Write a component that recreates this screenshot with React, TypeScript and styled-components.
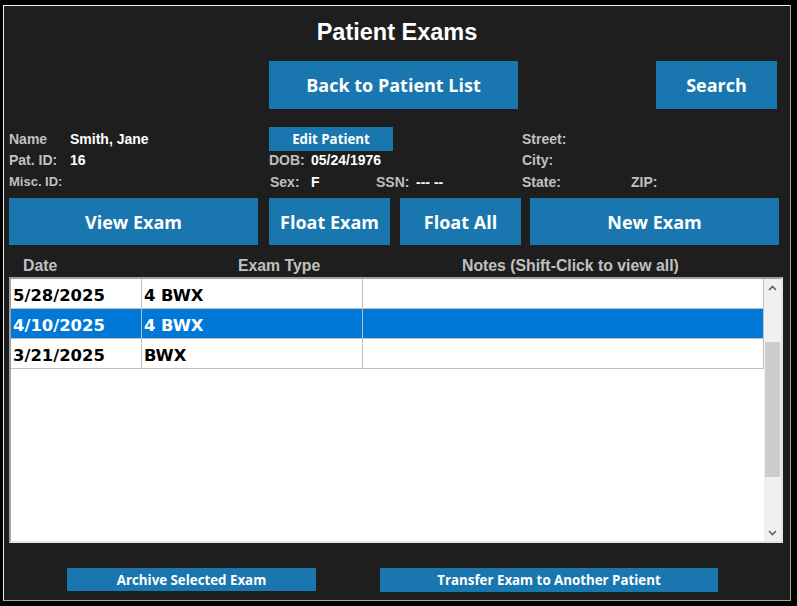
import React, { useState } from 'react';
import styled, { createGlobalStyle } from 'styled-components';

const GlobalStyle = createGlobalStyle`
  html, body {
    margin: 0;
    padding: 0;
    background: #000;
  }
  * {
    box-sizing: border-box;
  }
`;

const exams = [
  { date: '5/28/2025', type: '4 BWX', notes: '' },
  { date: '4/10/2025', type: '4 BWX', notes: '' },
  { date: '3/21/2025', type: 'BWX', notes: '' },
];

const App = () => {
  const [selected, setSelected] = useState(1);

  return (
    <>
      <GlobalStyle />
      <Panel>
        <Title>Patient Exams</Title>

        <TopRow>
          <BigButton $width={249} $height={48}>Back to Patient List</BigButton>
          <BigButton $width={121} $height={48} $gap={138}>Search</BigButton>
        </TopRow>

        <InfoGrid>
          <InfoLine>
            <Label $width={61}>Name</Label>
            <Value>Smith, Jane</Value>
          </InfoLine>
          <InfoLine>
            <SmallButton $width={124} $height={24}>Edit Patient</SmallButton>
          </InfoLine>
          <InfoLine>
            <Label>Street:</Label>
          </InfoLine>

          <InfoLine>
            <Label $width={61}>Pat. ID:</Label>
            <Value>16</Value>
          </InfoLine>
          <InfoLine>
            <Label $width={42}>DOB:</Label>
            <Value>05/24/1976</Value>
          </InfoLine>
          <InfoLine>
            <Label>City:</Label>
          </InfoLine>

          <InfoLine>
            <Label $size={13}>Misc. ID:</Label>
          </InfoLine>
          <InfoLine $indent={1}>
            <Label $width={41}>Sex:</Label>
            <Value $width={65}>F</Value>
            <Label $width={40}>SSN:</Label>
            <Value>--- --</Value>
          </InfoLine>
          <InfoLine>
            <Label $width={109}>State:</Label>
            <Label>ZIP:</Label>
          </InfoLine>
        </InfoGrid>

        <ActionRow>
          <BigButton $width={249} $height={47}>View Exam</BigButton>
          <BigButton $width={121} $height={47} $gap={11}>Float Exam</BigButton>
          <BigButton $width={121} $height={47} $gap={10}>Float All</BigButton>
          <BigButton $width={249} $height={47} $gap={9}>New Exam</BigButton>
        </ActionRow>

        <HeaderRow>
          <HeaderCell $width={229} $pad={14}>Date</HeaderCell>
          <HeaderCell $width={224}>Exam Type</HeaderCell>
          <HeaderCell>Notes (Shift-Click to view all)</HeaderCell>
        </HeaderRow>

        <Table>
          <Rows>
            {exams.map((exam, i) => (
              <Row key={exam.date} $selected={i === selected} onClick={() => setSelected(i)}>
                <Cell $width={131}>{exam.date}</Cell>
                <Cell $width={221}>{exam.type}</Cell>
                <Cell $width={401}>{exam.notes}</Cell>
              </Row>
            ))}
          </Rows>
          <ScrollBar>
            <ArrowButton>
              <svg width="9" height="6" viewBox="0 0 9 6">
                <path d="M1 5 L4.5 1.5 L8 5" fill="none" stroke="#606060" strokeWidth="1.6" />
              </svg>
            </ArrowButton>
            <Track>
              <Thumb />
            </Track>
            <ArrowButton>
              <svg width="9" height="6" viewBox="0 0 9 6">
                <path d="M1 1 L4.5 4.5 L8 1" fill="none" stroke="#606060" strokeWidth="1.6" />
              </svg>
            </ArrowButton>
          </ScrollBar>
        </Table>

        <BottomRow>
          <SmallButton $width={249} $height={23} $gap={58}>Archive Selected Exam</SmallButton>
          <SmallButton $width={338} $height={24} $gap={64}>Transfer Exam to Another Patient</SmallButton>
        </BottomRow>
      </Panel>
    </>
  );
};

const Panel = styled.div`
  margin: 5px 0 0 3px;
  width: 788px;
  height: 596px;
  background: #1e1e1e;
  border-top: 1px solid #f0f0f0;
  border-left: 1px solid #f0f0f0;
  border-right: 1px solid #a8a8a8;
  border-bottom: 1px solid #a8a8a8;
  padding-left: 5px;
  display: flex;
  flex-direction: column;
  font-family: 'Liberation Sans', Arial, sans-serif;
`;

const Title = styled.h1`
  margin: 0;
  height: 55px;
  line-height: 53px;
  text-align: center;
  color: #fff;
  font-size: 23.5px;
  font-weight: bold;
  padding-right: 5px;
`;

const TopRow = styled.div`
  display: flex;
  height: 48px;
  margin-left: 260px;
`;

const BigButton = styled.button<{ $width: number; $height: number; $gap?: number }>`
  width: ${(p) => p.$width}px;
  height: ${(p) => p.$height}px;
  margin-left: ${(p) => p.$gap || 0}px;
  padding: 0;
  border: none;
  background: #1976ae;
  color: #fff;
  font-family: 'Open Sans', 'Noto Sans', sans-serif;
  font-weight: bold;
  font-size: 18px;
  cursor: pointer;
`;

const SmallButton = styled(BigButton)`
  font-size: 13.3px;
`;

const InfoGrid = styled.div`
  display: grid;
  grid-template-columns: 260px 253px 1fr;
  grid-template-rows: 24px 19px 24px;
  margin-top: 17px;
`;

const InfoLine = styled.div<{ $indent?: number }>`
  display: flex;
  align-items: center;
  padding-left: ${(p) => p.$indent || 0}px;
  padding-top: 1px;
`;

const Label = styled.span<{ $width?: number; $size?: number }>`
  width: ${(p) => (p.$width ? `${p.$width}px` : 'auto')};
  color: #c0c0c0;
  font-weight: bold;
  font-size: ${(p) => p.$size || 14}px;
  white-space: nowrap;
`;

const Value = styled.span<{ $width?: number }>`
  width: ${(p) => (p.$width ? `${p.$width}px` : 'auto')};
  color: #fff;
  font-weight: bold;
  font-size: 14px;
  white-space: nowrap;
`;

const ActionRow = styled.div`
  display: flex;
  margin-top: 5px;
`;

const HeaderRow = styled.div`
  display: flex;
  align-items: flex-end;
  height: 32px;
  padding-bottom: 2px;
`;

const HeaderCell = styled.span<{ $width?: number; $pad?: number }>`
  width: ${(p) => (p.$width ? `${p.$width}px` : 'auto')};
  padding-left: ${(p) => p.$pad || 0}px;
  line-height: 18px;
  color: #c0c0c0;
  font-weight: bold;
  font-size: 15.8px;
  white-space: nowrap;
`;

const Table = styled.div`
  display: flex;
  width: 774px;
  height: 266px;
  background: #fff;
  border-top: 2px solid #a0a0a0;
  border-left: 2px solid #a0a0a0;
  border-right: 2px solid #e3e3e3;
  border-bottom: 2px solid #e3e3e3;
`;

const Rows = styled.div`
  flex: 1;
  display: flex;
  flex-direction: column;
`;

const Row = styled.div<{ $selected: boolean }>`
  display: flex;
  height: 30px;
  border-bottom: 1px solid #c0c0c0;
  background: ${(p) => (p.$selected ? '#0078d7' : '#fff')};
  color: ${(p) => (p.$selected ? '#fff' : '#000')};
  cursor: default;
`;

const Cell = styled.div<{ $width: number }>`
  width: ${(p) => p.$width}px;
  border-right: 1px solid #c0c0c0;
  padding: 4px 0 0 2px;
  line-height: 25px;
  font-family: 'DejaVu Sans', Verdana, sans-serif;
  font-weight: bold;
  font-size: 16.4px;
  white-space: nowrap;
  overflow: hidden;
`;

const ScrollBar = styled.div`
  width: 17px;
  display: flex;
  flex-direction: column;
  background: #f0f0f0;
`;

const ArrowButton = styled.div`
  height: 17px;
  display: flex;
  align-items: center;
  justify-content: center;
`;

const Track = styled.div`
  flex: 1;
  padding: 46px 1px 0 1px;
`;

const Thumb = styled.div`
  height: 135px;
  background: #cdcdcd;
`;

const BottomRow = styled.div`
  display: flex;
  align-items: flex-start;
  margin-top: 25px;
`;

export default App;
